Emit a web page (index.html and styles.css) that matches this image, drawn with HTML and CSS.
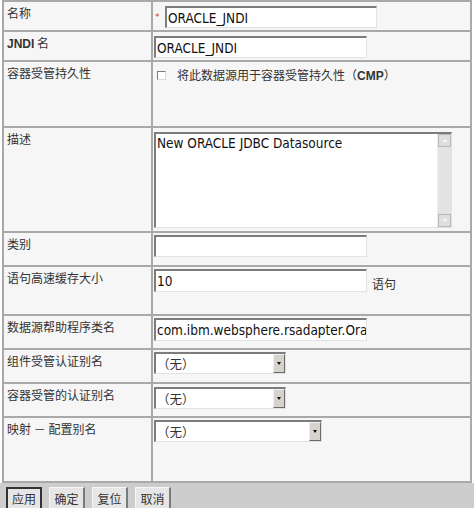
FILE: index.html
```html
<!DOCTYPE html>
<html lang="zh-CN">
<head>
<meta charset="utf-8">
<title>ORACLE_JNDI</title>
<link rel="stylesheet" href="styles.css">
</head>
<body>
<div class="sheet">
  <div class="row r1">
    <div class="label">名称</div>
    <div class="field"><span class="req">*</span><input class="text w212" value="ORACLE_JNDI"></div>
  </div>
  <div class="row r2">
    <div class="label"><span class="latin">JNDI</span> 名</div>
    <div class="field"><input class="text w213" value="ORACLE_JNDI"></div>
  </div>
  <div class="row r3">
    <div class="label">容器受管持久性</div>
    <div class="field check-field">
      <label class="check"><input type="checkbox" class="cb"><span>将此数据源用于容器受管持久性（<span class="latin">CMP</span>）</span></label>
    </div>
  </div>
  <div class="row r4">
    <div class="label">描述</div>
    <div class="field">
      <div class="textarea">
        <div class="ta-text">New ORACLE JDBC Datasource</div>
        <div class="scrollbar">
          <span class="sb-btn"><span class="arrow up"></span></span>
          <span class="sb-track"></span>
          <span class="sb-btn"><span class="arrow down"></span></span>
        </div>
      </div>
    </div>
  </div>
  <div class="row r5">
    <div class="label">类别</div>
    <div class="field"><input class="text w213" value=""></div>
  </div>
  <div class="row r6">
    <div class="label">语句高速缓存大小</div>
    <div class="field inline"><input class="text w213 h23" value="10"><span class="unit">语句</span></div>
  </div>
  <div class="row r7">
    <div class="label">数据源帮助程序类名</div>
    <div class="field"><input class="text w213 h23" value="com.ibm.websphere.rsadapter.Oracle10gDataStoreHelper"></div>
  </div>
  <div class="row r8">
    <div class="label">组件受管认证别名</div>
    <div class="field"><div class="select w132"><span class="sel-val">（无）</span><span class="sel-btn"><span class="tri"></span></span></div></div>
  </div>
  <div class="row r9">
    <div class="label">容器受管的认证别名</div>
    <div class="field"><div class="select w132"><span class="sel-val">（无）</span><span class="sel-btn"><span class="tri"></span></span></div></div>
  </div>
  <div class="row r10">
    <div class="label">映射 － 配置别名</div>
    <div class="field"><div class="select w168"><span class="sel-val">（无）</span><span class="sel-btn"><span class="tri"></span></span></div></div>
  </div>
</div>
<div class="buttons">
  <button class="btn default">应用</button>
  <button class="btn">确定</button>
  <button class="btn">复位</button>
  <button class="btn">取消</button>
</div>
</body>
</html>
```
FILE: styles.css
```css
* { box-sizing: border-box; }
html, body { margin: 0; padding: 0; background: #ffffff; }
body {
  width: 474px;
  height: 508px;
  overflow: hidden;
  font-family: "Noto Sans CJK SC", "Noto Sans", sans-serif;
  font-size: 12px;
  color: #333333;
}

.sheet {
  margin-left: 2px;
  width: 470px;
  border-top: 2px solid #a9a9a9;
  border-left: 2px solid #a9a9a9;
  border-right: 2px solid #a9a9a9;
  background: #f6f6f6;
}

.row {
  display: grid;
  grid-template-columns: 149px 1fr;
  border-bottom: 2px solid #a9a9a9;
}
.r1 { height: 30px; }
.r2 { height: 30px; }
.r3 { height: 66px; }
.r4 { height: 105px; }
.r5 { height: 34px; }
.r6 { height: 49px; }
.r7 { height: 34px; }
.r8 { height: 34px; }
.r9 { height: 34px; }
.r10 { height: 65px; }

.label {
  border-right: 2px solid #a9a9a9;
  padding: 4px 0 0 3px;
  line-height: 14px;
  white-space: nowrap;
}
.latin {
  font-family: "Liberation Sans", Arial, sans-serif;
  font-weight: bold;
}

.field {
  padding: 2px 0 0 1px;
  min-width: 0;
  overflow: hidden;
}
.r1 .field, .r2 .field, .r4 .field { padding-top: 4px; }
.r9 .field { padding-top: 3px; }

.inline { display: flex; align-items: flex-start; }

.req {
  display: inline-block;
  width: 11px;
  color: #d04040;
  font-family: "DejaVu Sans", sans-serif;
  font-size: 9px;
  line-height: 22px;
  vertical-align: top;
  padding-left: 1px;
}

.text {
  display: inline-block;
  vertical-align: top;
  height: 22px;
  margin: 0;
  padding: 0 0 0 1px;
  background: #ffffff;
  border-top: 2px solid #7c7c7c;
  border-left: 2px solid #7c7c7c;
  border-bottom: 1px solid #e2e2e2;
  border-right: 1px solid #e2e2e2;
  font-family: "DejaVu Sans", sans-serif;
  font-stretch: condensed;
  font-size: 13.5px;
  color: #111111;
  outline: none;
}
.w212 { width: 212px; }
.w213 { width: 213px; }
.h23 { height: 23px; }

.unit {
  margin: 8px 0 0 5px;
  line-height: 14px;
}

.check-field { padding-top: 6px; }
.check {
  display: flex;
  align-items: center;
  gap: 11px;
  padding-left: 3px;
  line-height: 14px;
}
.cb {
  appearance: none;
  -webkit-appearance: none;
  margin: 0;
  width: 9px;
  height: 9px;
  background: #ffffff;
  border-top: 1px solid #7a7a7a;
  border-left: 1px solid #7a7a7a;
  border-bottom: 1px solid #d8d8d8;
  border-right: 1px solid #d8d8d8;
}

.textarea {
  display: flex;
  width: 298px;
  height: 96px;
  background: #ffffff;
  border-top: 2px solid #7c7c7c;
  border-left: 2px solid #7c7c7c;
  border-bottom: 1px solid #e2e2e2;
  border-right: 1px solid #e2e2e2;
}
.ta-text {
  flex: 1;
  padding: 1px 0 0 1px;
  font-family: "DejaVu Sans", sans-serif;
  font-stretch: condensed;
  font-size: 13.5px;
  line-height: 16px;
  color: #111111;
}
.scrollbar {
  width: 14px;
  display: flex;
  flex-direction: column;
  background: #e3e3e3;
  border-left: 1px solid #eeeeee;
}
.sb-btn {
  height: 13px;
  display: flex;
  align-items: center;
  justify-content: center;
  background: #dedede;
  border: 1px solid #b8b8b8;
}
.sb-track { flex: 1; }
.arrow {
  width: 0;
  height: 0;
  border-left: 3px solid transparent;
  border-right: 3px solid transparent;
}
.arrow.up { border-bottom: 3px solid #f4f4f4; }
.arrow.down { border-top: 3px solid #f4f4f4; }

.select {
  display: flex;
  height: 22px;
  background: #ffffff;
  border-top: 2px solid #7c7c7c;
  border-left: 2px solid #7c7c7c;
  border-bottom: 1px solid #e2e2e2;
  border-right: 1px solid #e2e2e2;
}
.w132 { width: 132px; }
.w168 { width: 168px; }
.sel-val {
  flex: 1;
  padding-left: 1px;
  line-height: 19px;
  font-size: 12.5px;
  color: #333333;
}
.sel-btn {
  width: 12px;
  display: flex;
  align-items: center;
  justify-content: center;
  background: #d6d3cc;
  border-top: 1px solid #f0f0f0;
  border-left: 1px solid #f0f0f0;
  border-right: 1px solid #6a6a6a;
  border-bottom: 1px solid #6a6a6a;
}
.tri {
  width: 0;
  height: 0;
  border-left: 2px solid transparent;
  border-right: 2px solid transparent;
  border-top: 3px solid #111111;
}

.buttons {
  display: flex;
  gap: 7px;
  height: 25px;
  padding: 4px 0 0 6px;
  background: #cdcdcd;
}
.btn {
  width: 36px;
  height: 24px;
  margin: 0;
  padding: 0;
  background: #e6e6e6;
  border-top: 1px solid #f6f6f6;
  border-left: 1px solid #f6f6f6;
  border-right: 2px solid #7a7a7a;
  border-bottom: 2px solid #7a7a7a;
  font-family: "Noto Sans CJK SC", sans-serif;
  font-size: 12px;
  line-height: 18px;
  color: #333333;
}
.btn.default {
  border: 2px solid #333333;
}
```
